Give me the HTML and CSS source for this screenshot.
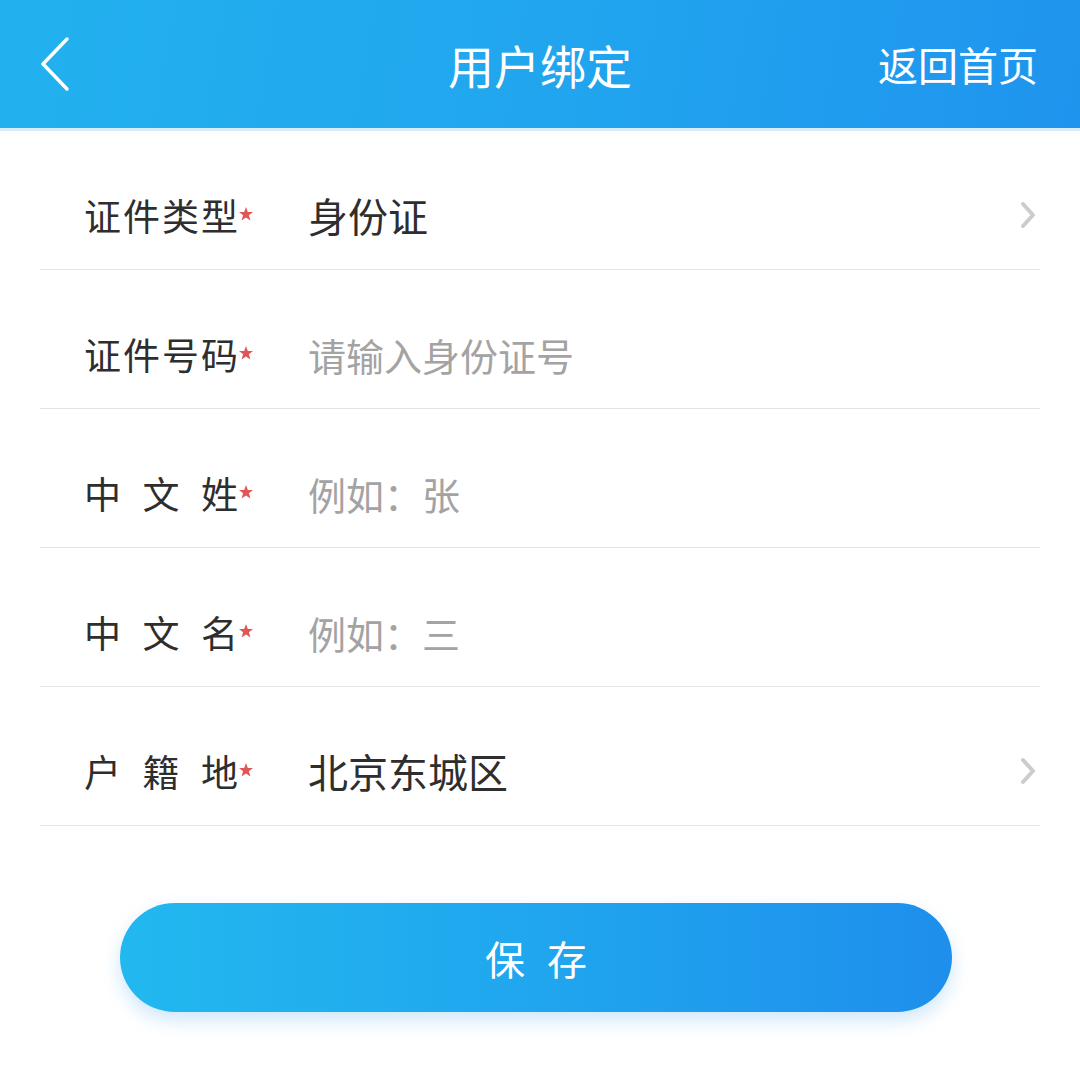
FILE: index.html
```html
<html><head>
<meta charset="utf-8">
<title>用户绑定</title>
<link rel="stylesheet" href="styles.css">
</head>
<body>
    <div class="header">
        <div class="back">
            <svg width="34" height="56" viewBox="0 0 34 56"><path d="M29 3 L5 28 L29 53" fill="none" stroke="#ffffff" stroke-width="3.5" stroke-linecap="round" stroke-linejoin="round"/></svg>
        </div>
        <div class="title">用户绑定</div>
        <div class="home">返回首页</div>
    </div>

    <div class="form">
        <div class="row">
            <div class="label"><span class="name">证件类型</span><svg class="star" width="16" height="16" viewBox="0 0 16 16"><path d="M8 1 L9.8 6 L15 6.1 L10.9 9.3 L12.4 14.5 L8 11.4 L3.6 14.5 L5.1 9.3 L1 6.1 L6.2 6 Z" fill="#e05656"/></svg></div>
            <div class="value">身份证</div>
            <svg class="arrow" width="20" height="30" viewBox="0 0 20 30"><path d="M5 4 L15 15 L5 26" fill="none" stroke="#cccccc" stroke-width="4" stroke-linecap="round" stroke-linejoin="round"/></svg>
        </div>
        <div class="row">
            <div class="label"><span class="name">证件号码</span><svg class="star" width="16" height="16" viewBox="0 0 16 16"><path d="M8 1 L9.8 6 L15 6.1 L10.9 9.3 L12.4 14.5 L8 11.4 L3.6 14.5 L5.1 9.3 L1 6.1 L6.2 6 Z" fill="#e05656"/></svg></div>
            <div class="value hint">请输入身份证号</div>
        </div>
        <div class="row">
            <div class="label"><span class="name">中文姓</span><svg class="star" width="16" height="16" viewBox="0 0 16 16"><path d="M8 1 L9.8 6 L15 6.1 L10.9 9.3 L12.4 14.5 L8 11.4 L3.6 14.5 L5.1 9.3 L1 6.1 L6.2 6 Z" fill="#e05656"/></svg></div>
            <div class="value hint">例如：张</div>
        </div>
        <div class="row">
            <div class="label"><span class="name">中文名</span><svg class="star" width="16" height="16" viewBox="0 0 16 16"><path d="M8 1 L9.8 6 L15 6.1 L10.9 9.3 L12.4 14.5 L8 11.4 L3.6 14.5 L5.1 9.3 L1 6.1 L6.2 6 Z" fill="#e05656"/></svg></div>
            <div class="value hint">例如：三</div>
        </div>
        <div class="row">
            <div class="label"><span class="name">户籍地</span><svg class="star" width="16" height="16" viewBox="0 0 16 16"><path d="M8 1 L9.8 6 L15 6.1 L10.9 9.3 L12.4 14.5 L8 11.4 L3.6 14.5 L5.1 9.3 L1 6.1 L6.2 6 Z" fill="#e05656"/></svg></div>
            <div class="value">北京东城区</div>
            <svg class="arrow" width="20" height="30" viewBox="0 0 20 30"><path d="M5 4 L15 15 L5 26" fill="none" stroke="#cccccc" stroke-width="4" stroke-linecap="round" stroke-linejoin="round"/></svg>
        </div>
    </div>

    <div class="actions">
        <button class="save">保存</button>
    </div>
</body>
</html>
```

FILE: styles.css
```css
body {
    margin: 0;
    background-color: #ffffff;
    font-family: "Noto Sans CJK SC", "Noto Sans", sans-serif;
    color: #333333;
}
.header {
    height: 128px;
    border-bottom: 3px solid #d6ecfa;
    background: linear-gradient(100deg, #22b1ef 0%, #21a6ee 50%, #1f94ee 100%);
    color: #ffffff;
    display: flex;
    align-items: center;
    justify-content: space-between;
    padding: 0 42px 0 38px;
    position: relative;
}
.back {
    width: 34px;
    height: 56px;
    display: flex;
}
.title {
    position: absolute;
    left: 0;
    right: 0;
    text-align: center;
    font-size: 46px;
    pointer-events: none;
}
.home {
    font-size: 40px;
}
.form {
    padding: 0 40px;
}
.row {
    box-sizing: border-box;
    height: 139px;
    padding-top: 30px;
    border-bottom: 1px solid #e4e4e4;
    display: flex;
    align-items: center;
    padding-left: 44px;
    padding-right: 2px;
}
.label {
    width: 224px;
    display: flex;
    align-items: center;
    flex-shrink: 0;
}
.name {
    width: 154px;
    font-size: 37px;
    text-align-last: justify;
    color: #2e2e2e;
}
.star {
    margin-left: 0;
    margin-top: -2px;
}
.value {
    flex: 1;
    font-size: 40px;
    color: #2e2e2e;
}
.hint {
    font-size: 38px;
    color: #a3a3a3;
}
.arrow {
    flex-shrink: 0;
}
.actions {
    padding: 77px 128px 40px 120px;
}
.save {
    width: 100%;
    height: 109px;
    border: none;
    border-radius: 55px;
    background: linear-gradient(90deg, #22b8ef 0%, #20a6ee 50%, #1e8fec 100%);
    box-shadow: 0 8px 18px rgba(60, 160, 240, 0.25);
    color: #ffffff;
    font-family: "Noto Sans CJK SC", "Noto Sans", sans-serif;
    font-size: 40px;
    letter-spacing: 22px;
    text-indent: 22px;
}
```
